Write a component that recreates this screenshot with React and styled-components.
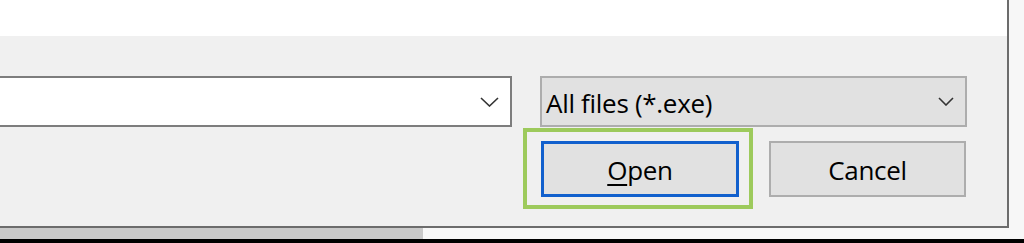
import React from "react";
import styled, { createGlobalStyle } from "styled-components";

const Global = createGlobalStyle`
  html, body { margin: 0; padding: 0; background: #000; }
  body { font-family: "Open Sans", "Noto Sans", Arial, sans-serif; }
`;

const Screen = styled.div`
  width: 1024px;
  height: 243px;
  display: flex;
  flex-direction: column;
  background: #000;
  overflow: hidden;
`;

const Backdrop = styled.div`
  height: 239px;
  background: #f7f7f7;
  display: flex;
  flex-direction: column;
`;

const Dialog = styled.div`
  width: 1009px;
  height: 228px;
  box-sizing: border-box;
  border-right: 2px solid #6c6c6c;
  border-bottom: 2px solid #6c6c6c;
  display: flex;
  flex-direction: column;
`;

const TopArea = styled.div`
  height: 36px;
  background: #fff;
`;

const Footer = styled.div`
  flex: 1;
  background: #f0f0f0;
  display: grid;
  grid-template-columns: 512px 427px;
  column-gap: 28px;
  row-gap: 14px;
  align-content: start;
  padding-top: 40px;
`;

const Combo = styled.div`
  height: 51px;
  box-sizing: border-box;
  border: 2px solid ${(p) => (p.$flat ? "#adadad" : "#7d7d7d")};
  border-left-width: ${(p) => (p.$flat ? "2px" : "0")};
  background: ${(p) => (p.$flat ? "#e1e1e1" : "#fff")};
  display: flex;
  align-items: center;
  justify-content: space-between;
  padding: 0 11px 0 4px;
`;

const ComboText = styled.span`
  font-size: 26px;
  color: #000;
  padding-top: 2px;
  letter-spacing: -0.3px;
`;

const Chevron = ({ w, h }) => (
  <svg width={w} height={h} viewBox={`0 0 ${w} ${h}`} fill="none">
    <polyline
      points={`1,1 ${w / 2},${h - 1} ${w - 1},1`}
      stroke="#333"
      strokeWidth="1.6"
      strokeLinejoin="miter"
    />
  </svg>
);

const Buttons = styled.div`
  display: flex;
  gap: 30px;
  padding-left: 1px;
`;

const Button = styled.div`
  position: relative;
  width: ${(p) => p.$w}px;
  height: 56px;
  box-sizing: border-box;
  border: ${(p) => (p.$default ? "3px solid #1160cd" : "2px solid #adadad")};
  background: #e1e1e1;
  display: flex;
  align-items: center;
  justify-content: center;
  font-size: 26px;
  color: #000;
  letter-spacing: -0.3px;
`;

const Label = styled.span`
  padding-top: 1px;
`;

const Mnemonic = styled.span`
  text-decoration: underline;
  text-decoration-thickness: 2px;
  text-underline-offset: 4px;
`;

/* offsets are measured from the padding box, inside the 3px default border */
const Highlight = styled.span`
  position: absolute;
  top: -16px;
  left: -21px;
  right: -17px;
  bottom: -15px;
  border: 4px solid #9dca5c;
  pointer-events: none;
`;

const Strip = styled.div`
  flex: 1;
  display: flex;
`;

const Thumb = styled.div`
  width: 423px;
  background: #c9c9c9;
`;

export default function App() {
  return (
    <>
      <Global />
      <Screen>
        <Backdrop>
          <Dialog>
            <TopArea />
            <Footer>
              <Combo>
                <span />
                <Chevron w={19} h={10} />
              </Combo>
              <Combo $flat>
                <ComboText>All files (*.exe)</ComboText>
                <Chevron w={16} h={9} />
              </Combo>
              <span />
              <Buttons>
                <Button $w={198} $default>
                  <Label>
                    <Mnemonic>O</Mnemonic>pen
                  </Label>
                  <Highlight />
                </Button>
                <Button $w={197}>
                  <Label>Cancel</Label>
                </Button>
              </Buttons>
            </Footer>
          </Dialog>
          <Strip>
            <Thumb />
          </Strip>
        </Backdrop>
      </Screen>
    </>
  );
}
